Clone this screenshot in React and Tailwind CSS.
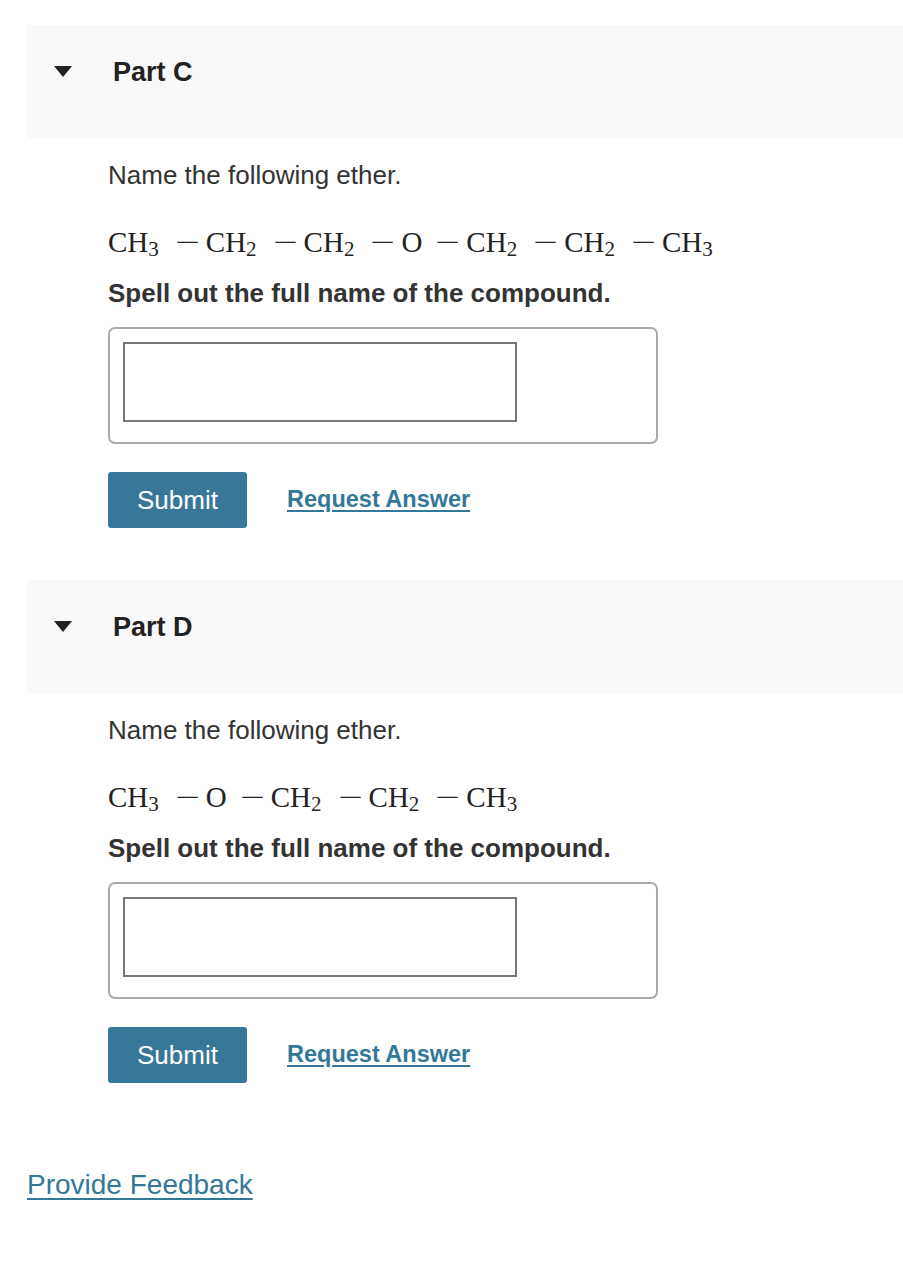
const font = { fontFamily: '"Liberation Sans", Arial, sans-serif' };

function Formula({ parts }) {
  return (
    <div className="flex items-baseline text-[29px] leading-[36px] text-[#222]" style={{ fontFamily: '"Liberation Serif", "DejaVu Serif", serif' }}>
      {parts.map((p, i) => (
        <span key={i} className="flex items-baseline">
          {i > 0 && (
            <span className="ml-[15px] mr-[8px] inline-block w-[21px] text-center scale-x-[1.5]">−</span>
          )}
          <span>{p[0]}</span>
          {p[1] && <sub className="text-[21px] relative top-[4px] align-baseline mr-[3px]">{p[1]}</sub>}
        </span>
      ))}
    </div>
  );
}

function Part({ label, parts }) {
  return (
    <section>
      <div className="h-[113px] bg-[#f9f9f9] flex items-start">
        <svg width="18" height="11" viewBox="0 0 18 11" className="ml-[27px] mt-[41px]">
          <path d="M0 0 H18 L9 11 Z" fill="#222" />
        </svg>
        <h2 className="ml-[41px] mt-[32px] text-[27px] leading-[30px] font-bold text-[#222]">{label}</h2>
      </div>
      <div className="pl-[81px]">
        <p className="mt-[22px] text-[26px] leading-[30px] text-[#333]">Name the following ether.</p>
        <div className="mt-[34px]">
          <Formula parts={parts} />
        </div>
        <p className="mt-[18px] text-[26px] leading-[30px] font-bold text-[#333]">
          Spell out the full name of the compound.
        </p>
        <div className="mt-[19px] w-[550px] h-[117px] border-2 border-[#aaa] rounded-[7px] p-[13px]">
          <input type="text" className="w-[394px] h-[80px] border-2 border-[#777] bg-white outline-none px-2 text-[24px]" />
        </div>
        <div className="mt-[28px] flex items-center">
          <button className="w-[139px] h-[56px] bg-[#37789a] rounded-[3px] text-white text-[26px]">Submit</button>
          <a href="#" className="ml-[40px] text-[23.5px] font-bold text-[#347899] underline underline-offset-[3px]">
            Request Answer
          </a>
        </div>
      </div>
    </section>
  );
}

export default function App() {
  return (
    <div className="bg-white min-h-[1280px] pt-[25px] pl-[27px]" style={font}>
      <Part label="Part C" parts={[["CH", "3"], ["CH", "2"], ["CH", "2"], ["O"], ["CH", "2"], ["CH", "2"], ["CH", "3"]]} />
      <div className="h-[52px]" />
      <Part label="Part D" parts={[["CH", "3"], ["O"], ["CH", "2"], ["CH", "2"], ["CH", "3"]]} />
      <div className="mt-[81px]">
        <a href="#" className="text-[28px] text-[#347899] underline underline-offset-[4px]">Provide Feedback</a>
      </div>
    </div>
  );
}
